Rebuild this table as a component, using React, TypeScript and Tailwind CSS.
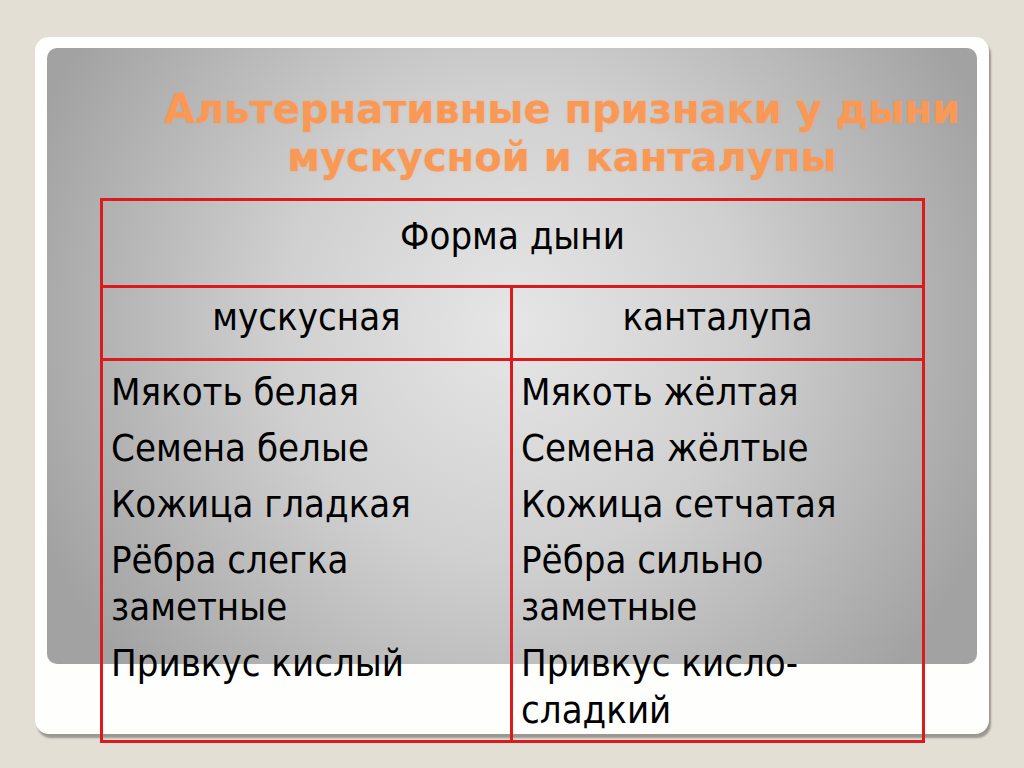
import React from "react";

const body = "font-['DejaVu_Sans_Condensed','DejaVu_Sans',sans-serif]";

function Cell({ lines }: { lines: React.ReactNode[] }) {
  return (
    <div className={`pt-[8px] pl-[8px] text-[38px] leading-[47px] text-black ${body}`}>
      {lines.map((l, i) => (
        <p key={i} className="mb-[9px]">
          {l}
        </p>
      ))}
    </div>
  );
}

export default function App() {
  return (
    <div className="w-[1024px] h-[768px] bg-[#e3dfd5] overflow-hidden pl-[35px] pt-[37px]">
      <div className="w-[954px] h-[697px] bg-[#fefefd] rounded-[14px] shadow-[2px_4px_2px_rgba(0,0,0,0.32)] pt-[11px] pl-[12px]">
        <div className="w-[930px] h-[616px] rounded-[10px] bg-[radial-gradient(ellipse_55%_85%_at_50%_45%,#e6e6e6_0%,#d0d0d0_45%,#a2a2a2_100%)] flex flex-col">
          <div className="h-[134px] shrink-0 pt-[37px] pl-[100px] text-center text-[40px] leading-[48px] font-bold text-[#fa9855] font-['DejaVu_Sans',sans-serif] [text-shadow:0_0_2px_rgba(250,140,70,0.4)]">
            Альтернативные признаки у дыни
            <br />
            мускусной и канталупы
          </div>
          <div className="ml-[53px] mt-[16px] w-[825px] h-[545px] shrink-0 border-[3px] border-[#dc1a1e] flex flex-col">
            <div className={`h-[87px] shrink-0 border-b-[3px] border-[#dc1a1e] flex items-start justify-center pt-[12px] text-[38px] leading-[47px] text-black ${body}`}>
              Форма дыни
            </div>
            <div className={`h-[73px] shrink-0 border-b-[3px] border-[#dc1a1e] flex text-[38px] leading-[47px] text-black ${body}`}>
              <div className="w-[410px] border-r-[3px] border-[#dc1a1e] flex items-start justify-center pt-[6px]">мускусная</div>
              <div className="flex-1 flex items-start justify-center pt-[6px]">канталупа</div>
            </div>
            <div className="flex-1 flex">
              <div className="w-[410px] border-r-[3px] border-[#dc1a1e]">
                <Cell
                  lines={[
                    "Мякоть белая",
                    "Семена белые",
                    "Кожица гладкая",
                    <>Рёбра слегка<br />заметные</>,
                    "Привкус кислый",
                  ]}
                />
              </div>
              <div className="flex-1">
                <Cell
                  lines={[
                    "Мякоть жёлтая",
                    "Семена жёлтые",
                    "Кожица сетчатая",
                    <>Рёбра сильно<br />заметные</>,
                    <>Привкус кисло-<br />сладкий</>,
                  ]}
                />
              </div>
            </div>
          </div>
        </div>
      </div>
    </div>
  );
}
